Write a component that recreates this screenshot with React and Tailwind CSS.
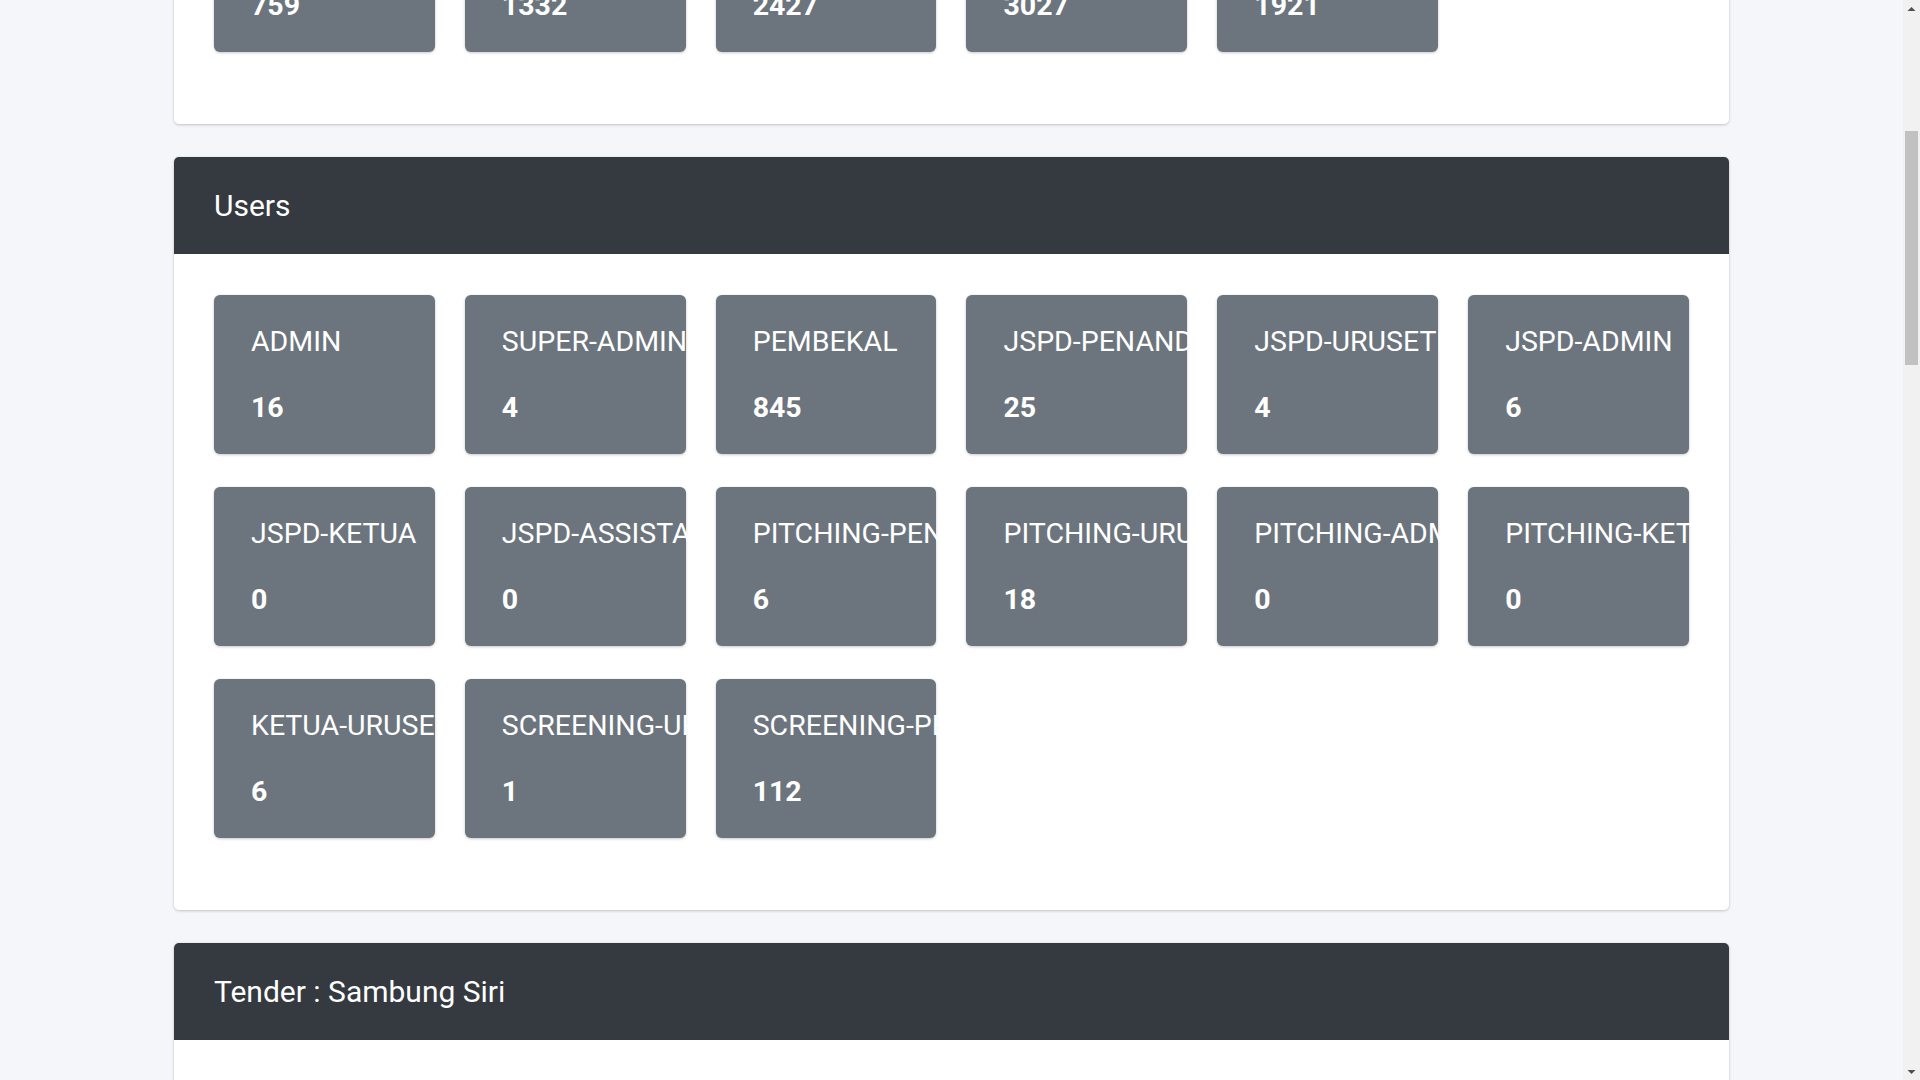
import React from "react";

const topStats = [
  { label: "TENDER", value: "759" },
  { label: "SEBUT HARGA", value: "1332" },
  { label: "PEMBELIAN TERUS", value: "2427" },
  { label: "RUNDINGAN TERUS", value: "3027" },
  { label: "PITCHING", value: "1921" },
];

const users = [
  { label: "ADMIN", value: "16" },
  { label: "SUPER-ADMIN", value: "4" },
  { label: "PEMBEKAL", value: "845" },
  { label: "JSPD-PENANDATANGAN", value: "25" },
  { label: "JSPD-URUSETIA", value: "4" },
  { label: "JSPD-ADMIN", value: "6" },
  { label: "JSPD-KETUA", value: "0" },
  { label: "JSPD-ASSISTANT", value: "0" },
  { label: "PITCHING-PENILAI", value: "6" },
  { label: "PITCHING-URUSETIA", value: "18" },
  { label: "PITCHING-ADMIN", value: "0" },
  { label: "PITCHING-KETUA", value: "0" },
  { label: "KETUA-URUSETIA", value: "6" },
  { label: "SCREENING-URUSETIA", value: "1" },
  { label: "SCREENING-PENILAI", value: "112" },
];

const tender = [
  { label: "BARU", value: "12" },
  { label: "DIBUKA", value: "8" },
  { label: "DITUTUP", value: "41" },
];

function Tile({ label, value }) {
  return (
    <div className="min-w-0 h-[159px] bg-[#6c757d] rounded-md shadow-[0_0_1px_rgba(0,0,0,0.125),0_1px_3px_rgba(0,0,0,0.2)] pt-[30px] pl-[37px] pr-[30px] text-white">
      <div className="whitespace-nowrap text-[28.5px] leading-[34px] font-normal mb-[32px]">
        {label}
      </div>
      <div className="whitespace-nowrap text-[28.5px] leading-[34px] font-bold">{value}</div>
    </div>
  );
}

function Card({ title, items }) {
  return (
    <section className="mb-[33px] rounded-[5px] shadow-[0_0_1px_rgba(0,0,0,0.125),0_1px_3px_rgba(0,0,0,0.2)]">
      <header className="bg-[#343a40] rounded-t-[5px] px-[40px] pt-[31px] pb-[31px]">
        <h2 className="text-white text-[30px] leading-[35px] font-normal">{title}</h2>
      </header>
      <div className="bg-white rounded-b-[5px] px-[40px] pt-[41px] pb-[72px]">
        <div className="grid grid-cols-6 gap-x-[30px] gap-y-[33px]">
          {items.map((it) => (
            <Tile key={it.label} label={it.label} value={it.value} />
          ))}
        </div>
      </div>
    </section>
  );
}

function Scrollbar() {
  return (
    <aside className="w-[17px] shrink-0 h-full bg-[#f1f1f1] flex flex-col items-center">
      <div className="h-[17px] w-full flex items-center justify-center">
        <svg width="9" height="6" viewBox="0 0 9 6">
          <polygon points="0.5,5 4.5,1 8.5,5" fill="#505050" />
        </svg>
      </div>
      <div className="mt-[114px] w-[13px] h-[234px] bg-[#c1c1c1]" />
      <div className="flex-1" />
      <div className="h-[17px] w-full flex items-center justify-center">
        <svg width="9" height="6" viewBox="0 0 9 6">
          <polygon points="0.5,1 8.5,1 4.5,5" fill="#505050" />
        </svg>
      </div>
    </aside>
  );
}

export default function App() {
  return (
    <div className="flex w-full h-[1080px] overflow-hidden bg-[#f4f6f9] font-['Roboto',sans-serif]">
      <main className="flex-1 min-w-0 h-full overflow-hidden">
        <div className="w-[1555px] mx-auto mt-[-245px]">
          <Card title="Tender" items={topStats} />
          <Card title="Users" items={users} />
          <Card title="Tender : Sambung Siri" items={tender} />
        </div>
      </main>
      <Scrollbar />
    </div>
  );
}
